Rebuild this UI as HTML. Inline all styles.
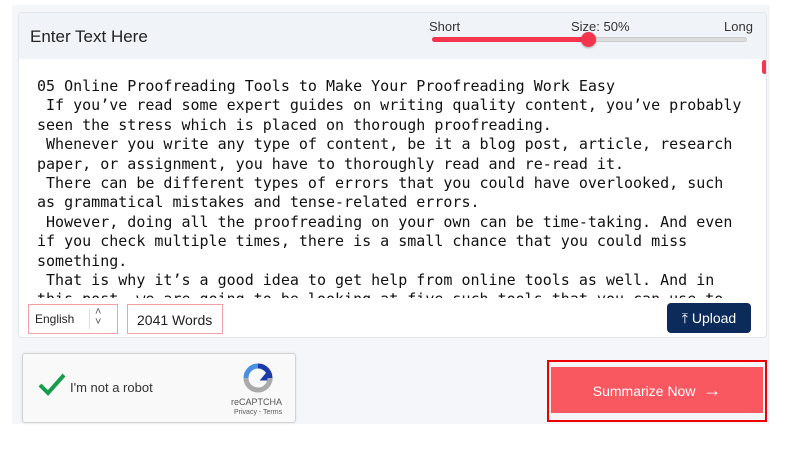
<!DOCTYPE html>
<html><head><meta charset="utf-8"><style>
*{margin:0;padding:0;box-sizing:border-box}
body{width:802px;height:455px;background:#fff;position:relative;overflow:hidden;font-family:"Liberation Sans",sans-serif}
.outer{position:absolute;left:12px;top:5px;width:758px;height:419px;background:#f5f6fa}
.card{position:absolute;left:18px;top:12px;width:749px;height:326px;background:#fff;border:1px solid #e3e6ec;border-radius:4px;overflow:hidden}
.head{position:absolute;left:0;top:0;width:100%;height:46px;background:#f0f3f7}
.title{position:absolute;left:11px;top:14px;font-size:17px;color:#222}
.lbl{position:absolute;top:6px;font-size:13px;color:#333}
.track{position:absolute;left:413px;top:24px;width:315px;height:5px;border-radius:3px;background:#ddd;border:1px solid #ccc}
.fill{position:absolute;left:413px;top:24px;width:157px;height:5px;border-radius:3px;background:#f5344e}
.thumb{position:absolute;left:562px;top:19px;width:15px;height:15px;border-radius:50%;background:#f5344e;box-shadow:0 1px 2px rgba(0,0,0,.3)}
.txt{position:absolute;left:37px;top:77px;width:720px;font-family:"DejaVu Sans Mono","Liberation Mono",monospace;font-size:15px;line-height:19.4px;color:#111;white-space:pre;height:221px;overflow:hidden}
.sb{position:absolute;left:743px;top:47px;width:5px;height:14px;border-radius:3px;background:#f5344e}
.box{position:absolute;border:1px solid #f3a0a6;background:#fff;font-size:13px;color:#222}
.upl{position:absolute;left:667px;top:303px;width:84px;height:30px;background:#0d2b5a;border-radius:4px;color:#fff;font-size:14px;line-height:30px;text-align:center}
.cap{position:absolute;left:22px;top:353px;width:274px;height:70px;background:#f9f9f9;border:1px solid #d3d3d3;border-radius:3px;box-shadow:0 0 3px rgba(0,0,0,.08)}
.sum{position:absolute;left:547px;top:360px;width:220px;height:62px;border:2px solid #e00}
.sumi{position:absolute;left:2px;top:5px;width:212px;height:46px;background:#fa5860;color:#fff;font-size:14px;text-align:center;line-height:46px}
</style></head><body>
<div class="outer"></div>
<div class="card">
<div class="head"></div>
<div class="title">Enter Text Here</div>
<div class="lbl" style="left:410px">Short</div>
<div class="lbl" style="left:552px">Size: 50%</div>
<div class="lbl" style="left:705px">Long</div>
<div class="track"></div><div class="fill"></div><div class="thumb"></div>
<div class="sb"></div>
</div>
<div class="txt">05 Online Proofreading Tools to Make Your Proofreading Work Easy
 If you’ve read some expert guides on writing quality content, you’ve probably
seen the stress which is placed on thorough proofreading.
 Whenever you write any type of content, be it a blog post, article, research
paper, or assignment, you have to thoroughly read and re-read it.
 There can be different types of errors that you could have overlooked, such
as grammatical mistakes and tense-related errors.
 However, doing all the proofreading on your own can be time-taking. And even
if you check multiple times, there is a small chance that you could miss
something.
 That is why it’s a good idea to get help from online tools as well. And in
this post, we are going to be looking at five such tools that you can use to</div>
<div class="box" style="left:28px;top:304px;width:90px;height:30px"><span style="position:absolute;left:6px;top:7px;font-size:12px">English</span><span style="position:absolute;left:60px;top:4px;width:1px;height:20px;background:#ddd"></span><span style="position:absolute;left:66px;top:2px;font-size:11px;line-height:10px;color:#555">˄<br>˅</span></div>
<div class="box" style="left:127px;top:304px;width:96px;height:30px"><span style="position:absolute;left:9px;top:7px;font-size:14px">2041 Words</span></div>
<div class="upl">⤒ Upload</div>
<div class="cap">
<svg style="position:absolute;left:14px;top:18px" width="30" height="26" viewBox="0 0 30 26"><path d="M3 13 L11 21 L27 3" stroke="#169d4c" stroke-width="4" fill="none"/></svg>
<span style="position:absolute;left:47px;top:26px;font-size:13px;color:#333">I'm not a robot</span>
<svg style="position:absolute;left:220px;top:9px" width="30" height="30" viewBox="0 0 30 30"><path d="M15 3a12 12 0 0 1 12 12h-5l5-6" stroke="#1c3aa9" stroke-width="5" fill="none"/><path d="M27 15a12 12 0 0 1-12 12" stroke="#aaa" stroke-width="5" fill="none"/><path d="M15 27A12 12 0 0 1 3 15" stroke="#aaa" stroke-width="5" fill="none"/><path d="M3 15A12 12 0 0 1 15 3" stroke="#4a90e2" stroke-width="5" fill="none"/></svg>
<span style="position:absolute;left:208px;top:43px;font-size:9px;color:#555">reCAPTCHA</span>
<span style="position:absolute;left:211px;top:55px;font-size:7px;color:#555">Privacy - Terms</span>
</div>
<div class="sum"><div class="sumi">Summarize Now &nbsp;<span style="font-size:18px">→</span></div></div>
</body></html>
